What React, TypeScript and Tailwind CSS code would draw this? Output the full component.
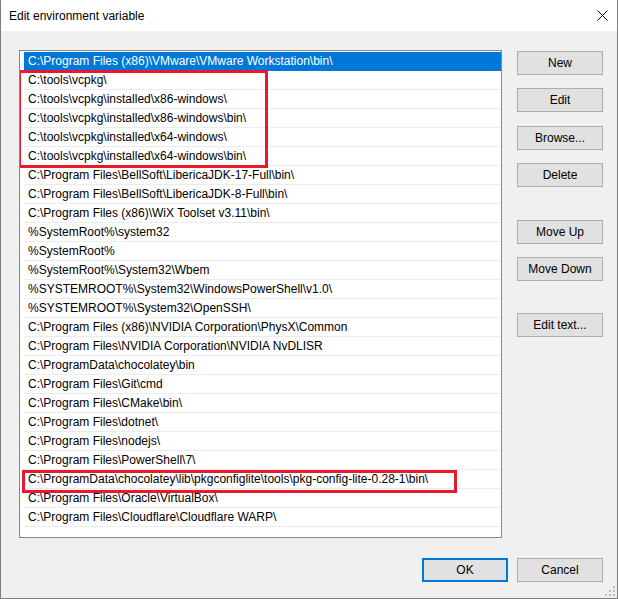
import React from "react";

const PATHS = [
  "C:\\Program Files (x86)\\VMware\\VMware Workstation\\bin\\",
  "C:\\tools\\vcpkg\\",
  "C:\\tools\\vcpkg\\installed\\x86-windows\\",
  "C:\\tools\\vcpkg\\installed\\x86-windows\\bin\\",
  "C:\\tools\\vcpkg\\installed\\x64-windows\\",
  "C:\\tools\\vcpkg\\installed\\x64-windows\\bin\\",
  "C:\\Program Files\\BellSoft\\LibericaJDK-17-Full\\bin\\",
  "C:\\Program Files\\BellSoft\\LibericaJDK-8-Full\\bin\\",
  "C:\\Program Files (x86)\\WiX Toolset v3.11\\bin\\",
  "%SystemRoot%\\system32",
  "%SystemRoot%",
  "%SystemRoot%\\System32\\Wbem",
  "%SYSTEMROOT%\\System32\\WindowsPowerShell\\v1.0\\",
  "%SYSTEMROOT%\\System32\\OpenSSH\\",
  "C:\\Program Files (x86)\\NVIDIA Corporation\\PhysX\\Common",
  "C:\\Program Files\\NVIDIA Corporation\\NVIDIA NvDLISR",
  "C:\\ProgramData\\chocolatey\\bin",
  "C:\\Program Files\\Git\\cmd",
  "C:\\Program Files\\CMake\\bin\\",
  "C:\\Program Files\\dotnet\\",
  "C:\\Program Files\\nodejs\\",
  "C:\\Program Files\\PowerShell\\7\\",
  "C:\\ProgramData\\chocolatey\\lib\\pkgconfiglite\\tools\\pkg-config-lite-0.28-1\\bin\\",
  "C:\\Program Files\\Oracle\\VirtualBox\\",
  "C:\\Program Files\\Cloudflare\\Cloudflare WARP\\",
  "",
];

const SELECTED = 0;

function WinButton({
  label,
  className = "",
  primary = false,
}: {
  label: string;
  className?: string;
  primary?: boolean;
}) {
  return (
    <button
      type="button"
      className={`h-[24px] w-[86px] bg-[#e1e1e1] text-[12px] leading-none text-black ${
        primary ? "border-2 border-[#0078d7]" : "border border-[#adadad]"
      } ${className}`}
    >
      {label}
    </button>
  );
}

function CloseIcon() {
  return (
    <svg width="11" height="11" viewBox="0 0 11 11" className="block">
      <path d="M0.5 0.5 L10.5 10.5 M10.5 0.5 L0.5 10.5" stroke="#000" strokeWidth="1" />
    </svg>
  );
}

function SizeGrip() {
  return (
    <svg width="10" height="10" viewBox="0 0 10 10" className="absolute bottom-[2px] right-[2px]">
      {[
        [8, 0],
        [8, 4],
        [4, 4],
        [8, 8],
        [4, 8],
        [0, 8],
      ].map(([x, y], i) => (
        <rect key={i} x={x} y={y} width="2" height="2" fill="#bcbcbc" />
      ))}
    </svg>
  );
}

export default function App() {
  return (
    <div
      className="relative flex h-[599px] w-[618px] flex-col border-x border-b border-[#7f7f7f] bg-[#f0f0f0] text-black"
      style={{ fontFamily: '"Segoe UI", "Liberation Sans", Arial, sans-serif' }}
    >
      {/* Title bar */}
      <div className="flex h-[31px] shrink-0 items-center justify-between bg-white pl-[8px] pr-[9px]">
        <span className="text-[12px]">Edit environment variable</span>
        <CloseIcon />
      </div>

      {/* Body */}
      <div className="flex pl-[18px] pr-[14px] pt-[19px]">
        {/* Path list */}
        <div className="relative h-[488px] w-[483px] overflow-hidden border border-[#828790] bg-white pl-[4px] pt-[1px]">
          {PATHS.map((p, i) => (
            <div
              key={i}
              className={`h-[19px] whitespace-nowrap border-b pl-[4px] text-[12px] leading-[18px] ${
                i === SELECTED
                  ? "border-[#0078d7] bg-[#0078d7] text-white"
                  : "border-[#ececec]"
              }`}
            >
              {p}
            </div>
          ))}

          {/* Annotation boxes */}
          <div className="absolute left-[-2px] top-[19px] h-[98px] w-[250px] border-[3px] border-[#e8192c]" />
          <div className="absolute left-[2px] top-[419px] h-[23px] w-[435px] border-[3px] border-[#e8192c]" />
        </div>

        {/* Side buttons */}
        <div className="ml-[15px] flex flex-col pt-[1px]">
          <WinButton label="New" />
          <WinButton label="Edit" className="mt-[13px]" />
          <WinButton label="Browse..." className="mt-[14px]" />
          <WinButton label="Delete" className="mt-[13px]" />
          <WinButton label="Move Up" className="mt-[33px]" />
          <WinButton label="Move Down" className="mt-[13px]" />
          <WinButton label="Edit text..." className="mt-[32px]" />
        </div>
      </div>

      {/* Dialog buttons */}
      <div className="flex justify-end gap-[9px] pr-[14px] pt-[20px]">
        <WinButton label="OK" primary />
        <WinButton label="Cancel" />
      </div>

      <SizeGrip />
    </div>
  );
}
